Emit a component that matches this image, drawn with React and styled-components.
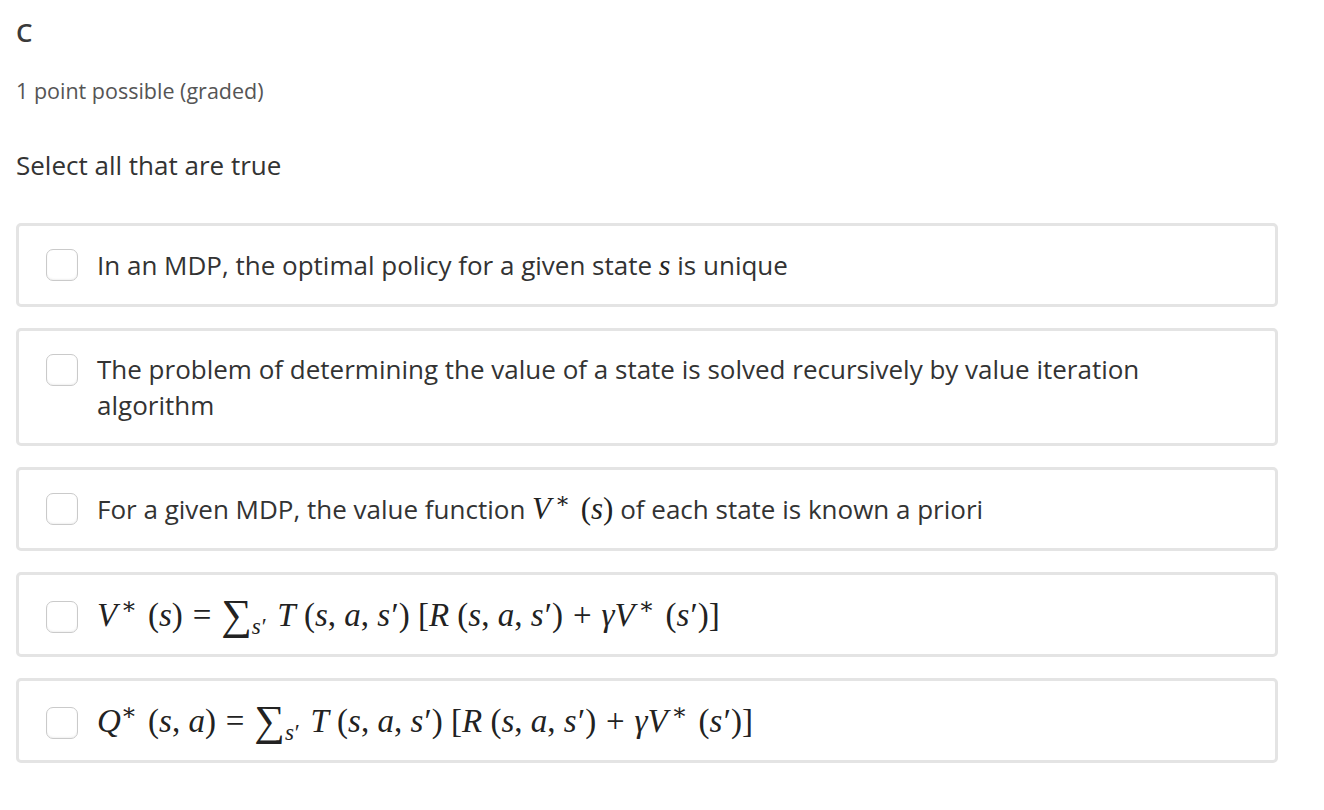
import React from 'react';
import styled, { createGlobalStyle } from 'styled-components';

const GlobalStyle = createGlobalStyle`
  body {
    margin: 0;
    background: #fff;
    font-family: "Open Sans", "Liberation Sans", sans-serif;
    color: #333;
  }
`;

const Page = styled.div`
  padding: 14px 46px 40px 16px;
`;

const Title = styled.h3`
  font-size: 26px;
  font-weight: 600;
  line-height: 36px;
  margin: 0;
  color: #3a3a3a;
`;

const Points = styled.div`
  font-size: 21.5px;
  line-height: 30px;
  color: #555;
  margin-top: 26px;
`;

const Prompt = styled.p`
  font-size: 26px;
  line-height: 36px;
  margin: 41px 0 40px;
`;

const Options = styled.div`
  display: flex;
  flex-direction: column;
  gap: 21px;
`;

const Card = styled.label`
  display: flex;
  align-items: flex-start;
  gap: 19px;
  border: 3px solid #e4e4e4;
  border-radius: 5px;
  padding: ${(p) => (p.$math ? '21px 27px 20px' : '20px 27px')};
`;

const Box = styled.span`
  flex: none;
  width: 30px;
  height: 30px;
  margin-top: ${(p) => (p.$math ? '5px' : '3px')};
  border: 1px solid #cacaca;
  border-radius: 7px;
  background: #fff;
  box-shadow: inset 0 -1px 2px rgba(0, 0, 0, 0.06);
`;

const Text = styled.span`
  font-size: 26px;
  line-height: 36px;
`;

const MathLine = styled.span`
  font-family: "Liberation Serif", "DejaVu Serif", serif;
  font-size: ${(p) => p.$size || '33px'};
  line-height: 38px;
  color: #222;
  white-space: nowrap;
`;

const I = styled.i`
  font-style: italic;
`;

const Sup = styled.sup`
  font-size: 0.72em;
  vertical-align: 0.5em;
  line-height: 0;
  margin-left: ${(p) => p.$ml || '0'};
  margin-right: 0.12em;
`;

const Sub = styled.sub`
  font-size: 0.7em;
  font-style: italic;
  vertical-align: -0.35em;
  line-height: 0;
  margin-right: 0.1em;
`;

const Sigma = styled.span`
  font-size: 1.3em;
  line-height: 0;
  vertical-align: -0.08em;
`;

const Rel = styled.span`
  margin: 0 0.3em;
`;

const Prime = styled.span`
  font-style: normal;
  margin-left: 0.04em;
`;

const Sum = () => (
  <>
    <Sigma>∑</Sigma>
    <Sub>
      s<Prime>′</Prime>
    </Sub>
  </>
);

const Args = ({ prime }) => (
  <>
    (<I>s</I>, <I>a</I>, <I>s</I>
    {prime && <Prime>′</Prime>})
  </>
);

const Bellman = () => (
  <>
    <Sum /> <I>T</I> <Args prime /> [<I>R</I> <Args prime />
    <Rel>+</Rel>
    <I>γV</I>
    <Sup $ml="0.15em">∗</Sup> (<I>s</I>
    <Prime>′</Prime>)]
  </>
);

const InlineV = () => (
  <MathLine $size="31px">
    <I>V</I>
    <Sup $ml="0.18em">∗</Sup> (<I>s</I>)
  </MathLine>
);

const InlineS = () => (
  <MathLine $size="30px">
    <I>s</I>
  </MathLine>
);

const App = () => {
  return (
    <Page>
      <GlobalStyle />
      <Title>C</Title>
      <Points>1 point possible (graded)</Points>
      <Prompt>Select all that are true</Prompt>
      <Options>
        <Card>
          <Box />
          <Text>
            In an MDP, the optimal policy for a given state <InlineS /> is unique
          </Text>
        </Card>
        <Card>
          <Box />
          <Text>
            The problem of determining the value of a state is solved recursively by value iteration
            algorithm
          </Text>
        </Card>
        <Card>
          <Box />
          <Text>
            For a given MDP, the value function <InlineV /> of each state is known a priori
          </Text>
        </Card>
        <Card $math>
          <Box $math />
          <MathLine>
            <I>V</I>
            <Sup $ml="0.15em">∗</Sup> (<I>s</I>)<Rel>=</Rel>
            <Bellman />
          </MathLine>
        </Card>
        <Card $math>
          <Box $math />
          <MathLine>
            <I>Q</I>
            <Sup>∗</Sup> (<I>s</I>, <I>a</I>)<Rel>=</Rel>
            <Bellman />
          </MathLine>
        </Card>
      </Options>
    </Page>
  );
};

export default App;
